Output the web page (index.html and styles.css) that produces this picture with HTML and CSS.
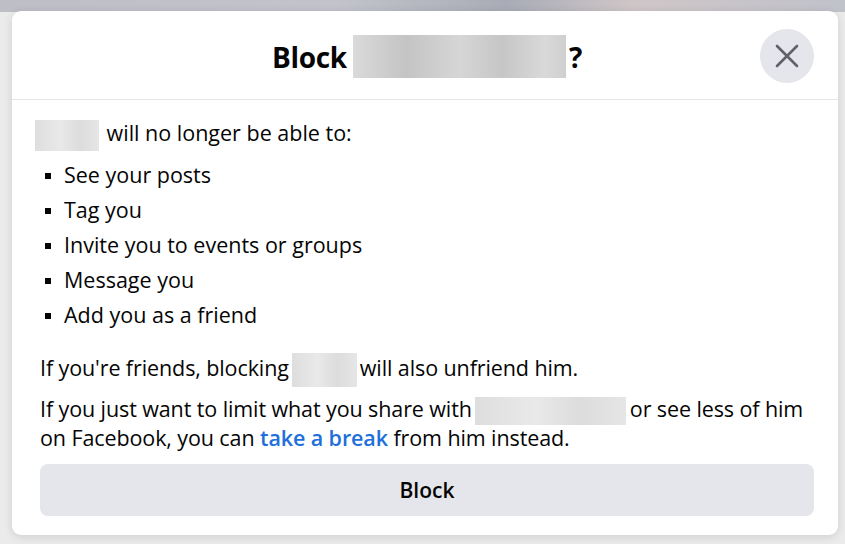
FILE: index.html
```html
<!DOCTYPE html>
<html lang="en">
<head>
    <meta charset="UTF-8">
    <meta name="viewport" content="width=device-width, initial-scale=1.0">
    <title>Block</title>
    <link rel="stylesheet" href="styles.css">
</head>
<body>

    <!-- Blurred page behind the dialog -->
    <div class="backdrop"></div>

    <!-- Block dialog -->
    <div class="dialog">
        <div class="dialog-header">
            <h2 class="dialog-title">Block <span class="blur blur-title"></span>?</h2>
            <button class="close-btn" aria-label="Close">
                <svg width="26" height="26" viewBox="0 0 26 26">
                    <path d="M3 3 L23 23 M23 3 L3 23" stroke="#5f6369" stroke-width="2.6" stroke-linecap="round" fill="none"/>
                </svg>
            </button>
        </div>

        <div class="dialog-body">
            <p class="intro"><span class="blur blur-name"></span> will no longer be able to:</p>

            <ul class="rules">
                <li>See your posts</li>
                <li>Tag you</li>
                <li>Invite you to events or groups</li>
                <li>Message you</li>
                <li>Add you as a friend</li>
            </ul>

            <p class="note">If you're friends, blocking <span class="blur blur-short"></span> will also unfriend him.</p>
            <p class="note">If you just want to limit what you share with <span class="blur blur-long"></span> or see less of him on Facebook, you can <a href="#">take a break</a> from him instead.</p>

            <button class="block-btn">Block</button>
        </div>
    </div>

</body>
</html>
```

FILE: styles.css
```css
body {
    font-family: "Open Sans", "Noto Sans", sans-serif;
    background-color: #ebebec;
    margin: 0;
    padding: 0;
    height: 544px;
    overflow: hidden;
    position: relative;
    color: #050505;
}

/* Page behind the dialog */
.backdrop {
    height: 12px;
    background: linear-gradient(90deg, #bdbec6 0%, #c2c3cb 40%, #a9acb6 60%, #cfc6c8 75%, #c0c2ca 100%);
}

.dialog {
    position: absolute;
    top: 11px;
    left: 12px;
    width: 826px;
    height: 524px;
    background-color: #fff;
    border-radius: 9px;
    box-shadow: 0 2px 10px rgba(0, 0, 0, 0.12);
}

/* Header */
.dialog-header {
    height: 88px;
    border-bottom: 1px solid #e5e5e6;
    display: flex;
    align-items: center;
    justify-content: center;
    position: relative;
}

.dialog-title {
    margin: 3px 0 0 4px;
    font-size: 28px;
    font-weight: 700;
    display: flex;
    align-items: center;
    letter-spacing: -0.3px;
}

.close-btn {
    position: absolute;
    right: 24px;
    top: 18px;
    width: 54px;
    height: 54px;
    border-radius: 50%;
    border: none;
    background-color: #e4e6eb;
    display: flex;
    align-items: center;
    justify-content: center;
    padding: 0;
    cursor: pointer;
}

/* Blurred names */
.blur {
    display: inline-block;
    vertical-align: middle;
    background: linear-gradient(90deg, #dedede, #e9e9e9 40%, #dcdcdc 70%, #e6e6e6);
}

.blur-title {
    width: 213px;
    height: 43px;
    margin: 0 3px 0 6px;
    background: linear-gradient(90deg, #dadada, #c4c4c4 25%, #d6d6d6 50%, #c6c6c6 70%, #d9d9d9 90%, #cfcfcf);
}

.blur-name {
    width: 64px;
    height: 31px;
    margin: -8px 2px -8px -5px;
}

.blur-short {
    width: 65px;
    height: 34px;
    margin: -10px -3px -10px -2px;
}

.blur-long {
    width: 151px;
    height: 28px;
    margin: -8px -2px -8px -2px;
}

/* Body */
.dialog-body {
    padding: 18px 24px 0 28px;
    font-size: 21.5px;
}

.intro {
    margin: 0;
    line-height: 29px;
}

.rules {
    list-style: none;
    margin: 10px 0 21px 0;
    padding: 0;
}

.rules li {
    line-height: 35px;
    padding-left: 24px;
    position: relative;
}

.rules li::before {
    content: "";
    position: absolute;
    left: 5px;
    top: 16px;
    width: 6px;
    height: 6px;
    background-color: #050505;
}

.note {
    margin: 0 0 11px 0;
    line-height: 29.5px;
    letter-spacing: -0.1px;
}

.note a {
    color: #216fdb;
    font-weight: 600;
    text-decoration: none;
}

.block-btn {
    margin-top: 0;
    width: 774px;
    height: 52px;
    border: none;
    border-radius: 8px;
    background-color: #e4e6eb;
    font-family: inherit;
    font-size: 21px;
    font-weight: 600;
    color: #050505;
    cursor: pointer;
}
```
